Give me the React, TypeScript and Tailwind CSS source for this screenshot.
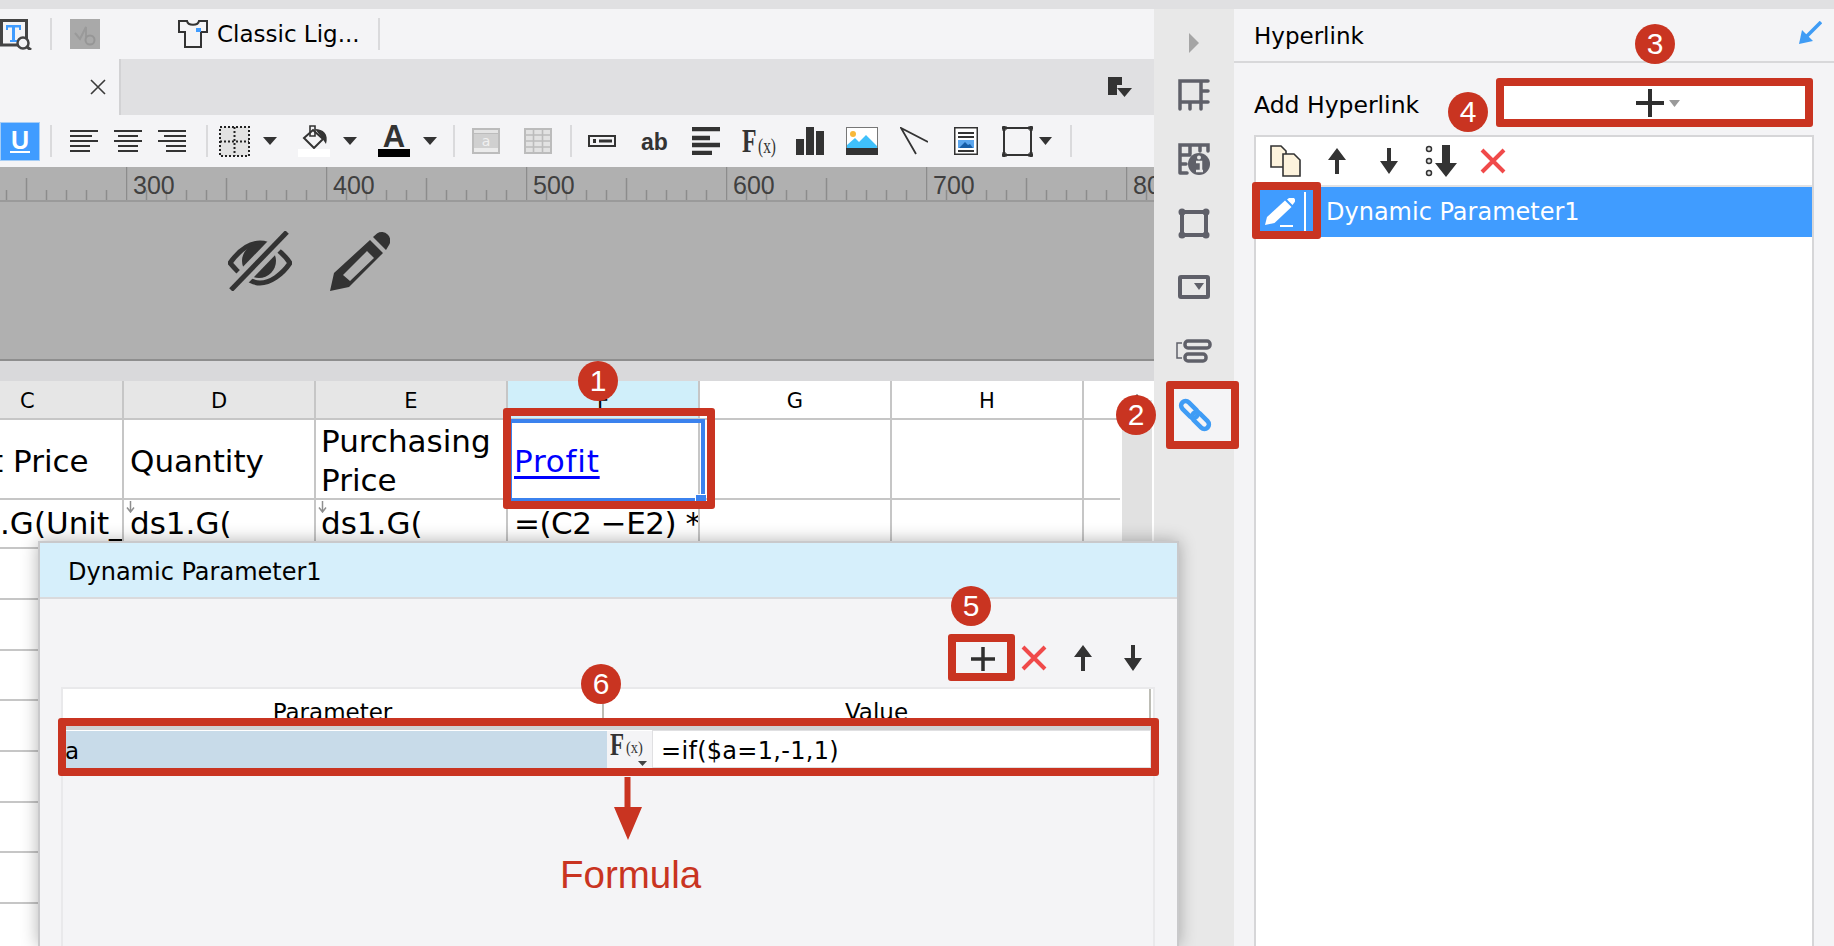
const RED = "#c93421";

function Sep({ className }: { className: string }) {
  return <div className={`w-[2px] h-[32px] bg-[#dadadc] shrink-0 ${className}`} />;
}

function Caret({ className, w = 14 }: { className: string; w?: number }) {
  return (
    <svg width={w} height="8" viewBox="0 0 14 8" preserveAspectRatio="none" className={`shrink-0 ${className}`}>
      <path d="M0 0H14L7 8Z" fill="#333" />
    </svg>
  );
}

function AlignIcon({ className, d }: { className: string; d: string }) {
  return (
    <svg width="28" height="24" viewBox="0 0 28 24" className={`shrink-0 ${className}`}>
      <path d={d} stroke="#333" strokeWidth="2" fill="none" />
    </svg>
  );
}

function ArrowUp({ className }: { className: string }) {
  return (
    <svg width="20" height="26" viewBox="0 0 20 26" className={`shrink-0 ${className}`}>
      <path d="M10 0L19 12H12V26H8V12H1Z" fill="#333" />
    </svg>
  );
}

function ArrowDown({ className }: { className: string }) {
  return (
    <svg width="20" height="26" viewBox="0 0 20 26" className={`shrink-0 ${className}`}>
      <path d="M8 0H12V13H19L10 26L1 13H8Z" fill="#333" />
    </svg>
  );
}

function RedX({ className }: { className: string }) {
  return (
    <svg width="26" height="26" viewBox="0 0 26 26" className={`shrink-0 ${className}`}>
      <path d="M2 2L24 24M24 2L2 24" stroke="#f04a4a" strokeWidth="4" fill="none" />
    </svg>
  );
}

function FxToolbar({ className }: { className: string }) {
  return (
    <div className={`flex items-start shrink-0 h-[28px] text-[#333] font-['Liberation_Serif',serif] leading-none ${className}`}>
      <span className="inline-block w-[16px] origin-left scale-x-[0.72] font-bold text-[33px] leading-[28px]">F</span>
      <span className="inline-block w-[17px] origin-left scale-x-[0.77] text-[20px] leading-[20px] mt-[9px]">(x)</span>
    </div>
  );
}

function FxCell({ className }: { className: string }) {
  return (
    <div className={`flex items-start shrink-0 text-[#333] font-['Liberation_Serif',serif] leading-none ${className}`}>
      <span className="inline-block w-[16px] origin-left scale-x-[0.72] font-bold text-[32px] leading-[26px]">F</span>
      <span className="inline-block w-[17px] origin-left scale-x-[0.85] text-[17px] leading-[17px] mt-[8px]">(x)</span>
    </div>
  );
}

function Ruler() {
  const labels = [200, 300, 400, 500, 600, 700, 800];
  return (
    <div className="h-[35px] bg-[#b0b0b0] border-b-2 border-[#9a9a9a] flex overflow-hidden shrink-0">
      <div className="flex ml-[-74px] shrink-0">
        {labels.map((n) => (
          <div key={n} className="relative w-[200px] h-[33px] shrink-0">
            <svg width="200" height="33" viewBox="0 0 200 33" className="absolute left-0 top-0">
              <path
                d="M0.5 0V33M20.5 23V33M40.5 23V33M60.5 23V33M80.5 23V33M100.5 11V33M120.5 23V33M140.5 23V33M160.5 23V33M180.5 23V33"
                stroke="#8c8c8c"
                strokeWidth="1.5"
              />
            </svg>
            <span className="absolute left-[7px] top-[6px] font-['Liberation_Sans',sans-serif] text-[25px] leading-[25px] text-[#404040]">
              {n}
            </span>
          </div>
        ))}
      </div>
    </div>
  );
}

function Toolbar1() {
  return (
    <div className="h-[50px] bg-[#f4f4f6] flex items-center shrink-0">
      <svg width="32" height="31" viewBox="0 0 32 31" className="shrink-0">
        <path d="M1.5 1.5H26.5V26H1.5Z" stroke="#444" strokeWidth="3" fill="none" />
        <path d="M6 6H21V11H19V8.5H15V21H17V23H10V21H12V8.5H8V11H6Z" fill="#409cff" />
        <circle cx="23" cy="24" r="5.5" stroke="#444" strokeWidth="2.5" fill="#f4f4f6" />
        <path d="M27 28L31 31" stroke="#444" strokeWidth="3" />
      </svg>
      <Sep className="ml-[18px]" />
      <div className="ml-[18px] w-[30px] h-[30px] bg-[#a9a9a9] shrink-0 flex items-center justify-center">
        <svg width="30" height="30" viewBox="0 0 30 30">
          <path d="M5 14L10 20L16 8V18" stroke="#9a9a9a" strokeWidth="2" fill="none" />
          <circle cx="20" cy="21" r="4.5" stroke="#969696" strokeWidth="2" fill="none" />
        </svg>
      </div>
      <svg width="30" height="28" viewBox="0 0 30 28" className="ml-[78px] shrink-0">
        <path d="M9 1H1V12H7V27H23V12H29V1H21C20 6 10 6 9 1Z" stroke="#333" strokeWidth="2" fill="none" />
        <rect x="18" y="8" width="5" height="4" fill="#409cff" />
      </svg>
      <span className="ml-[9px] text-[23px] leading-none whitespace-nowrap text-black">Classic Lig...</span>
      <Sep className="ml-[18px]" />
    </div>
  );
}

function TabBar() {
  return (
    <div className="h-[56px] bg-[#e0e0e2] flex shrink-0">
      <div className="w-[121px] bg-[#f4f4f6] border-r-2 border-[#d2d2d4] flex items-center justify-end pr-[13px]">
        <svg width="16" height="16" viewBox="0 0 16 16" className="mt-[-1px]">
          <path d="M1 1L15 15M15 1L1 15" stroke="#3a3a3a" strokeWidth="1.6" />
        </svg>
      </div>
      <svg width="24" height="20" viewBox="0 0 24 20" className="ml-auto mr-[22px] mt-[18px]">
        <path d="M0 0H14V8H9V18H0Z" fill="#333" />
        <path d="M9 11H24L16.5 20Z" fill="#333" />
      </svg>
    </div>
  );
}

function Toolbar2() {
  return (
    <div className="h-[52px] bg-[#f4f4f6] flex items-center shrink-0">
      <div className="w-[40px] h-[39px] bg-[#409cff] border border-[#a5cdf6] flex flex-col items-center justify-center shrink-0">
        <span className="font-['Liberation_Sans',sans-serif] font-bold text-white text-[25px] leading-[22px] border-b-2 border-white px-[1px]">U</span>
      </div>
      <Sep className="ml-[10px]" />
      <AlignIcon className="ml-[18px]" d="M0 2H28M0 7H22M0 12H28M0 17H20M0 22H20" />
      <AlignIcon className="ml-[16px]" d="M0 2H28M4 7H24M0 12H28M4 17H24M4 22H24" />
      <AlignIcon className="ml-[16px]" d="M0 2H28M6 7H28M0 12H28M8 17H28M8 22H28" />
      <Sep className="ml-[20px]" />
      <svg width="31" height="31" viewBox="0 0 31 31" className="ml-[11px] shrink-0">
        <rect x="1" y="1" width="29" height="29" fill="#e2e2e2" stroke="#222" strokeWidth="2" strokeDasharray="2 2" />
        <path d="M15.5 1V30M1 15.5H30" stroke="#222" strokeWidth="2" strokeDasharray="2 2" />
      </svg>
      <Caret className="ml-[13px]" />
      <div className="ml-[21px] w-[32px] h-[32px] flex flex-col items-center shrink-0">
        <svg width="30" height="24" viewBox="0 0 30 24">
          <path d="M5 13L14 5L24 14L15 23Z" stroke="#333" strokeWidth="2" fill="#f4f4f6" />
          <path d="M11 1H16V11H11Z" stroke="#333" strokeWidth="1.6" fill="none" />
          <path d="M16 4C24 4 30 9 27 19L23 13Z" fill="#333" />
        </svg>
        <div className="w-[32px] h-[8px] bg-white" />
      </div>
      <Caret className="ml-[13px]" />
      <div className="ml-[21px] w-[32px] h-[32px] flex flex-col items-center shrink-0">
        <span className="font-['Liberation_Sans',sans-serif] font-bold text-[31px] leading-[24px] text-[#333]">A</span>
        <div className="w-[32px] h-[8px] bg-black" />
      </div>
      <Caret className="ml-[13px]" />
      <Sep className="ml-[16px]" />
      <div className="ml-[17px] w-[28px] h-[26px] border-2 border-[#bcbcbc] bg-[#d0d0d0] flex flex-col shrink-0">
        <div className="h-[4px] border-b border-[#bcbcbc] bg-[#e4e4e4]" />
        <span className="flex-1 text-center text-[14px] leading-[14px] text-[#f0f0f0]">a</span>
        <div className="h-[4px] bg-[#ebebeb]" />
      </div>
      <svg width="28" height="26" viewBox="0 0 28 26" className="ml-[24px] shrink-0">
        <rect x="1" y="1" width="26" height="24" fill="#e2e2e2" stroke="#bcbcbc" strokeWidth="2" />
        <path d="M9.5 1V25M18.5 1V25M1 7H27M1 13H27M1 19H27" stroke="#bcbcbc" strokeWidth="1.6" />
      </svg>
      <Sep className="ml-[18px]" />
      <svg width="28" height="12" viewBox="0 0 28 12" className="ml-[16px] shrink-0">
        <rect x="1" y="1" width="26" height="10" fill="none" stroke="#333" strokeWidth="2" />
        <rect x="5" y="4" width="3" height="4" fill="#333" />
        <rect x="11" y="4.5" width="13" height="3" fill="#333" />
      </svg>
      <span className="ml-[25px] w-[26px] font-['Liberation_Sans',sans-serif] font-bold text-[23px] leading-none text-[#333] shrink-0 mt-[3px]">ab</span>
      <svg width="28" height="28" viewBox="0 0 28 28" className="ml-[25px] shrink-0">
        <path d="M0 2H28M0 11H18M0 18H28M0 26H20" stroke="#333" strokeWidth="4.5" />
      </svg>
      <FxToolbar className="ml-[22px] w-[33px]" />
      <svg width="28" height="28" viewBox="0 0 28 28" className="ml-[21px] shrink-0">
        <rect x="0" y="12" width="8" height="16" fill="#333" />
        <rect x="10" y="0" width="8" height="28" fill="#333" />
        <rect x="20" y="4" width="8" height="24" fill="#333" />
      </svg>
      <svg width="32" height="28" viewBox="0 0 32 28" className="ml-[22px] shrink-0">
        <rect x="0.5" y="0.5" width="31" height="27" fill="#fff" stroke="#777" />
        <path d="M1 22V18L9 11L13 15L20 8L31 19V22Z" fill="#3fc0fb" />
        <circle cx="7" cy="7" r="3" fill="#f8b83a" />
        <rect x="0" y="21" width="32" height="7" fill="#333" />
      </svg>
      <svg width="28" height="28" viewBox="0 0 28 28" className="ml-[22px] shrink-0">
        <path d="M16 27L1 1L28 15" stroke="#333" strokeWidth="1.8" fill="none" />
      </svg>
      <svg width="24" height="28" viewBox="0 0 24 28" className="ml-[26px] shrink-0">
        <rect x="0.75" y="0.75" width="22.5" height="26.5" fill="#fff" stroke="#333" strokeWidth="1.5" />
        <path d="M4 6H20M4 10H20M4 24H20" stroke="#333" strokeWidth="2" />
        <rect x="4" y="13" width="16" height="8" fill="#5ba6ee" />
        <path d="M5 21L11 15L14 18L16 17L19 21Z" fill="#175ea8" />
      </svg>
      <svg width="31" height="31" viewBox="0 0 31 31" className="ml-[24px] shrink-0">
        <rect x="2" y="2" width="27" height="27" fill="none" stroke="#333" strokeWidth="2" />
        <path d="M0 2H5M26 2H31M0 29H5M26 29H31M2 0V5M29 0V5M2 26V31M29 26V31" stroke="#333" strokeWidth="3" />
      </svg>
      <Caret className="ml-[6px]" w={13} />
      <Sep className="ml-[18px]" />
    </div>
  );
}

function GrayArea() {
  return (
    <div className="h-[159px] bg-[#b0b0b0] border-b-2 border-[#8e8e8e] flex items-start pt-[29px] pl-[228px] shrink-0">
      <svg width="64" height="60" viewBox="0 0 64 60" className="shrink-0">
        <path d="M2 32C12 18 22 12 32 12C42 12 54 20 62 32C54 44 42 52 32 52C22 52 12 44 2 32Z" stroke="#333" strokeWidth="5" fill="none" />
        <circle cx="31" cy="30" r="17" fill="#333" />
        <path d="M60 0L2 60" stroke="#b0b0b0" strokeWidth="15" />
        <path d="M59 1L3 59" stroke="#333" strokeWidth="5" />
      </svg>
      <svg width="60" height="60" viewBox="0 0 60 60" className="ml-[38px] shrink-0">
        <path fillRule="evenodd" d="M0 60L4 42L40 9L53 22L19 56ZM13 44L20 50L44 27L37 20Z" fill="#333" />
        <path d="M43 6L47 2.5A8.5 8.5 0 0 1 59 14L56 19Z" fill="#333" />
      </svg>
    </div>
  );
}

const CELL = "border-r-2 border-b-2 border-[#c6c6c6] overflow-hidden whitespace-nowrap";
const GRID = "grid grid-cols-[124px_192px_192px_192px_192px_192px_36px]";
const LOWER_ROWS = ["h-[51px]", "h-[51px]", "h-[50px]", "h-[51px]", "h-[51px]", "h-[50px]", "h-[51px]", "h-[51px]"];

function HeaderCell({ label, tone, align = "justify-center" }: { label: string; tone: string; align?: string }) {
  return <div className={`${CELL} ${tone} ${align} flex items-center pt-[3px] text-[21px] leading-none text-black`}>{label}</div>;
}

function SmallDown() {
  return (
    <svg width="9" height="12" viewBox="0 0 9 12" className="absolute left-[2px] top-[1px]">
      <path d="M4.5 0V10M1 6.5L4.5 11L8 6.5" stroke="#8e8e8e" strokeWidth="1.5" fill="none" />
    </svg>
  );
}

function Sheet() {
  return (
    <div className="flex-1 flex min-h-0 overflow-hidden bg-white">
      <div className="w-[1120px] shrink-0 text-[31px] text-black">
        <div className={`${GRID} h-[39px] overflow-hidden`}>
          <HeaderCell label="C" tone="bg-[#e6e6e6] pl-[20px]" align="justify-start" />
          <HeaderCell label="D" tone="bg-[#e6e6e6]" />
          <HeaderCell label="E" tone="bg-[#e6e6e6]" />
          <HeaderCell label="F" tone="bg-[#d0effa]" />
          <HeaderCell label="G" tone="bg-white" />
          <HeaderCell label="H" tone="bg-white" />
          <div className="border-b-2 border-[#c6c6c6]" />
        </div>
        <div className={`${GRID} h-[80px]`}>
          <div className={`${CELL} flex items-center leading-none pt-[5px]`}>
            <span className="ml-[-9px]">t Price</span>
          </div>
          <div className={`${CELL} flex items-center leading-none pl-[6px] pt-[5px]`}>Quantity</div>
          <div className={`${CELL} flex flex-col justify-center leading-[39px] pl-[5px] pt-[4px]`}>
            <span>Purchasing</span>
            <span>Price</span>
          </div>
          <div className={`${CELL} flex items-center leading-none pl-[6px] pt-[5px]`}>
            <span className="text-[#0000ff] tracking-[0.8px] underline decoration-[3px] underline-offset-[4px]">Profit</span>
          </div>
          <div className={CELL} />
          <div className={CELL} />
          <div className="border-b-2 border-[#c6c6c6]" />
        </div>
        <div className={`${GRID} h-[49px]`}>
          <div className={`${CELL} leading-[46px]`}>.G(Unit_</div>
          <div className={`${CELL} relative leading-[46px] pl-[6px]`}>
            <SmallDown />
            ds1.G(
          </div>
          <div className={`${CELL} relative leading-[46px] pl-[5px]`}>
            <SmallDown />
            ds1.G(
          </div>
          <div className={`${CELL} leading-[46px] pl-[6px] tracking-[-0.5px]`}>=(C2 −E2) *</div>
          <div className={CELL} />
          <div className={CELL} />
          <div className="border-b-2 border-[#c6c6c6]" />
        </div>
        {LOWER_ROWS.map((h, i) => (
          <div key={i} className={`${GRID} ${h}`}>
            <div className={CELL} />
            <div className={CELL} />
            <div className={CELL} />
            <div className={CELL} />
            <div className={CELL} />
            <div className={CELL} />
            <div className="border-b-2 border-[#c6c6c6]" />
          </div>
        ))}
      </div>
      <div className="w-[2px] bg-white shrink-0" />
      <div className="w-[30px] shrink-0 flex flex-col bg-[#e1e1e1]">
        <div className="h-[19px] bg-white flex items-end justify-center">
          <svg width="10" height="6" viewBox="0 0 10 6">
            <path d="M5 0L10 6H0Z" fill="#333" />
          </svg>
        </div>
      </div>
      <div className="w-[2px] bg-white shrink-0" />
    </div>
  );
}

function Strip() {
  return (
    <div className="w-[80px] bg-[#e8e8e8] flex flex-col items-start shrink-0">
      <svg width="10" height="20" viewBox="0 0 10 20" className="ml-[35px] mt-[24px]">
        <path d="M0 0L10 10L0 20Z" fill="#a5a5a5" />
      </svg>
      <svg width="32" height="32" viewBox="0 0 32 32" className="ml-[24px] mt-[26px]">
        <path d="M2 30V2H30M2 23H30M23 2V30M23 12H30M12 23V30" stroke="#5f6069" strokeWidth="3.5" strokeLinecap="round" fill="none" />
      </svg>
      <svg width="32" height="32" viewBox="0 0 32 32" className="ml-[24px] mt-[32px]">
        <path d="M2 30V2H30V8M2 30H9M2 12H12M2 21H8M12 2V11M22 2V8" stroke="#5f6069" strokeWidth="3.5" strokeLinecap="round" fill="none" />
        <circle cx="21" cy="21" r="11" fill="#5f6069" />
        <circle cx="21" cy="14.5" r="2" fill="#e8e8e8" />
        <path d="M18 19H23V28H25M18 28H24" stroke="#e8e8e8" strokeWidth="2.5" fill="none" />
      </svg>
      <svg width="32" height="31" viewBox="0 0 32 31" className="ml-[24px] mt-[33px]">
        <rect x="4" y="4" width="24" height="23" stroke="#5f6069" strokeWidth="4" fill="none" />
        <circle cx="4" cy="4" r="3.5" fill="#5f6069" />
        <circle cx="28" cy="4" r="3.5" fill="#5f6069" />
        <circle cx="4" cy="27" r="3.5" fill="#5f6069" />
        <circle cx="28" cy="27" r="3.5" fill="#5f6069" />
      </svg>
      <svg width="32" height="24" viewBox="0 0 32 24" className="ml-[24px] mt-[36px]">
        <rect x="2" y="2" width="28" height="20" rx="1" stroke="#5f6069" strokeWidth="4" fill="none" />
        <path d="M16 8H26L21 15Z" fill="#5f6069" />
      </svg>
      <svg width="36" height="24" viewBox="0 0 36 24" className="ml-[22px] mt-[40px]">
        <path d="M6 4H1V19H6" stroke="#5f6069" strokeWidth="1.5" fill="none" />
        <rect x="9" y="2" width="25" height="7" rx="3" stroke="#5f6069" strokeWidth="3.5" fill="none" />
        <rect x="9" y="15" width="21" height="7" rx="3" stroke="#5f6069" strokeWidth="3.5" fill="none" />
      </svg>
    </div>
  );
}

function RightPanel() {
  return (
    <div className="flex-1 bg-[#f4f4f6] flex flex-col min-w-0">
      <div className="h-[54px] border-b-2 border-[#d8d8da] flex items-center pl-[20px] pr-[12px] shrink-0">
        <span className="text-[23px] leading-none text-black mt-[3px]">Hyperlink</span>
        <svg width="23" height="23" viewBox="0 0 23 23" className="ml-auto mt-[-6px]">
          <path d="M22 1L5 18" stroke="#3f9cf5" strokeWidth="3.5" />
          <path d="M0 23L3 9L14 20Z" fill="#3f9cf5" />
        </svg>
      </div>
      <div className="h-[72px] flex items-center pl-[20px] pr-[24px] shrink-0">
        <span className="text-[23.5px] leading-none text-black mt-[14px]">Add Hyperlink</span>
        <div className="ml-auto w-[310px] h-[40px] bg-white flex items-center pl-[136px] mt-[8px]">
          <svg width="28" height="28" viewBox="0 0 28 28">
            <path d="M14 0V28M0 14H28" stroke="#2f2f2f" strokeWidth="4" />
          </svg>
          <svg width="11" height="7" viewBox="0 0 11 7" className="ml-[5px]">
            <path d="M0 0H11L5.5 7Z" fill="#9a9a9a" />
          </svg>
        </div>
      </div>
      <div className="flex-1 ml-[20px] mr-[20px] border-2 border-b-0 border-[#d6d6d8] bg-white min-h-0">
        <div className="h-[50px] border-b-2 border-[#e2e2e4] flex items-center">
          <svg width="31" height="32" viewBox="0 0 31 32" className="ml-[14px] shrink-0">
            <path d="M1 1H11L16 6V22H1Z" fill="#fdf3dd" stroke="#333" strokeWidth="1.6" />
            <path d="M13 9H24L30 15V31H13Z" fill="#fdf3dd" stroke="#333" strokeWidth="1.6" />
          </svg>
          <ArrowUp className="ml-[26px]" />
          <ArrowDown className="ml-[32px]" />
          <svg width="32" height="32" viewBox="0 0 32 32" className="ml-[26px] shrink-0">
            <circle cx="4" cy="4" r="2.5" fill="#e4e4e4" stroke="#333" strokeWidth="1.5" />
            <circle cx="4" cy="16" r="2.5" fill="#e4e4e4" stroke="#333" strokeWidth="1.5" />
            <circle cx="4" cy="28" r="2.5" fill="#e4e4e4" stroke="#333" strokeWidth="1.5" />
            <path d="M17 0H25V18H32L21 32L10 18H17Z" fill="#333" />
          </svg>
          <RedX className="ml-[23px]" />
        </div>
        <div className="h-[50px] bg-[#409cff] flex items-center text-white">
          <svg width="30" height="29" viewBox="0 0 60 58" className="ml-[9px] shrink-0">
            <path d="M0 54L4 38L40 5L53 18L19 50Z" fill="#fff" />
            <path d="M44 3L48 0A6 6 0 0 1 58 10L55 14Z" fill="#fff" />
            <path d="M30 56H56" stroke="#fff" strokeWidth="4" />
          </svg>
          <div className="w-[2px] h-[41px] bg-white ml-[9px] shrink-0" />
          <span className="ml-[20px] text-[24px] leading-none whitespace-nowrap">Dynamic Parameter1</span>
        </div>
      </div>
    </div>
  );
}

function Dialog() {
  return (
    <div className="absolute left-[38px] top-[541px] w-[1141px] h-[405px] border-2 border-b-0 border-[#c9c9cb] bg-[#f4f4f6] shadow-[0_0_16px_rgba(0,0,0,0.3)] flex flex-col">
      <div className="h-[56px] bg-[#d6effb] border-b-2 border-[#dadadc] flex items-center pl-[28px] pt-[3px] shrink-0">
        <span className="text-[24px] leading-none text-black">Dynamic Parameter1</span>
      </div>
      <div className="flex items-start justify-end mt-[46px] h-[27px] pr-[34px] shrink-0">
        <svg width="24" height="24" viewBox="0 0 24 24" className="mr-[26px] mt-[2px] shrink-0">
          <path d="M12 0V24M0 12H24" stroke="#2f2f2f" strokeWidth="3.5" />
        </svg>
        <RedX className="mr-[26px]" />
        <ArrowUp className="mr-[30px]" />
        <ArrowDown className="" />
      </div>
      <div className="ml-[21px] mr-[22px] mt-[15px] flex-1 border-2 border-b-0 border-[#e9e9eb] min-h-0">
        <div className="h-[37px] bg-white flex items-start text-[23px] leading-none text-black overflow-hidden">
          <div className="w-[541px] h-full border-r-2 border-[#bdbdb5] pt-[12px] text-center shrink-0">Parameter</div>
          <div className="flex-1 h-full border-r-2 border-[#bdbdb5] pt-[12px] text-center mr-[2px]">Value</div>
        </div>
        <div className="h-[42px] border-t-4 border-[#d0d0d2] flex text-[23px] text-black">
          <div className="w-[544px] bg-[#c8dbe9] border-t border-white leading-[40px] pl-[2px] shrink-0">a</div>
          <div className="w-[45px] bg-[#f4f4f6] border-t border-white relative shrink-0 flex items-start pl-[3px]">
            <FxCell className="w-[33px]" />
            <svg width="9" height="5" viewBox="0 0 9 5" className="absolute right-[5px] bottom-[2px]">
              <path d="M0 0H9L4.5 5Z" fill="#444" />
            </svg>
          </div>
          <div className="flex-1 bg-white border border-[#e0e0e2] leading-[40px] pl-[8px] text-[24px] tracking-[0.3px] mr-[2px] overflow-hidden whitespace-nowrap">=if($a=1,-1,1)</div>
        </div>
      </div>
    </div>
  );
}

function Marker({ n, className }: { n: number; className: string }) {
  return (
    <div className={`absolute w-[40px] h-[40px] rounded-full bg-[#c93421] text-white flex items-center justify-center font-['Liberation_Sans',sans-serif] text-[30px] leading-none ${className}`}>
      {n}
    </div>
  );
}

function RedBox({ className }: { className: string }) {
  return <div className={`absolute border-[8px] border-[#c93421] rounded-[3px] ${className}`} />;
}

export default function App() {
  return (
    <div className="relative w-[1834px] h-[946px] overflow-hidden bg-[#e0e0e2] flex flex-col font-['DejaVu_Sans',sans-serif]">
      <div className="h-[9px] shrink-0" />
      <div className="flex-1 flex min-h-0">
        <div className="w-[1154px] flex flex-col shrink-0 min-w-0">
          <Toolbar1 />
          <TabBar />
          <Toolbar2 />
          <Ruler />
          <GrayArea />
          <div className="h-[20px] bg-[#d9d9db] shrink-0" />
          <Sheet />
        </div>
        <Strip />
        <RightPanel />
      </div>

      {/* selected cell */}
      <div className="absolute left-[508px] top-[419px] w-[197px] h-[83px] border-4 border-[#3b82ee]" />
      <div className="absolute left-[695px] top-[494px] w-[11px] h-[8px] bg-[#3b82ee] border-l border-t border-white" />

      <Dialog />

      {/* link tab */}
      <div className="absolute left-[1166px] top-[381px] w-[73px] h-[68px] bg-[#f4f4f6] border-[8px] border-[#c93421] rounded-[3px] flex items-center justify-center">
        <svg width="34" height="34" viewBox="0 0 34 34" className="mr-[16px]">
          <rect x="1.5" y="7" width="20" height="9" rx="4.5" transform="rotate(45 11.5 11.5)" fill="none" stroke="#3f9cf5" strokeWidth="4.5" />
          <rect x="12.5" y="18" width="20" height="9" rx="4.5" transform="rotate(45 22.5 22.5)" fill="none" stroke="#3f9cf5" strokeWidth="4.5" />
        </svg>
      </div>

      {/* annotations */}
      <RedBox className="left-[503px] top-[408px] w-[212px] h-[101px]" />
      <RedBox className="left-[1496px] top-[78px] w-[317px] h-[49px]" />
      <RedBox className="left-[1252px] top-[182px] w-[69px] h-[57px]" />
      <RedBox className="left-[948px] top-[634px] w-[67px] h-[47px]" />
      <RedBox className="left-[58px] top-[718px] w-[1101px] h-[58px]" />
      <Marker n={1} className="left-[578px] top-[361px]" />
      <Marker n={2} className="left-[1116px] top-[395px]" />
      <Marker n={3} className="left-[1635px] top-[24px]" />
      <Marker n={4} className="left-[1448px] top-[92px]" />
      <Marker n={5} className="left-[951px] top-[586px]" />
      <Marker n={6} className="left-[581px] top-[664px]" />

      {/* formula callout */}
      <svg width="28" height="63" viewBox="0 0 28 63" className="absolute left-[614px] top-[777px]">
        <path d="M10.5 0H16.5V30H28L14 63L0 30H10.5Z" fill={RED} />
      </svg>
      <span className="absolute left-[560px] top-[853px] font-['Liberation_Sans',sans-serif] text-[38.5px] leading-[44px] text-[#c93421]">Formula</span>
    </div>
  );
}
